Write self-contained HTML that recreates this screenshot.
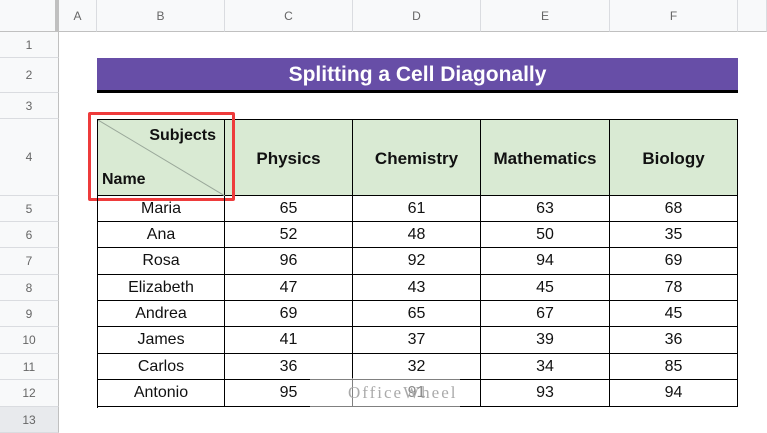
<!DOCTYPE html><html><head><style>
body{margin:0;width:767px;height:433px;overflow:hidden;background:#fff;font-family:"Liberation Sans",Arial,sans-serif;position:relative}
div{position:absolute;box-sizing:border-box}
.ch{top:0;height:32px;background:#f8f9fa;border-right:1px solid #dadce0;border-bottom:1px solid #c0c0c0;color:#666;font-size:12px;text-align:center;line-height:32px}
.rh{left:0;width:59px;background:#f8f9fa;border-right:1px solid #c0c0c0;border-bottom:1px solid #dadce0;color:#666;font-size:12px;text-align:center}
.c{border-right:1px solid #000;border-bottom:1px solid #000;text-align:center;font-size:16px;color:#111}
.h{background:#d9ead3;font-weight:bold;font-size:17px;line-height:77px}
</style></head><body>
<div class="ch" style="left:0;width:59px;border-right:4px solid #c0c0c0"></div>
<div class="ch" style="left:59px;width:38px">A</div>
<div class="ch" style="left:97px;width:128px">B</div>
<div class="ch" style="left:225px;width:128px">C</div>
<div class="ch" style="left:353px;width:128px">D</div>
<div class="ch" style="left:481px;width:129px">E</div>
<div class="ch" style="left:610px;width:128px">F</div>
<div class="ch" style="left:738px;width:29px"></div>
<div class="rh" style="top:32px;height:26px;line-height:26px">1</div>
<div class="rh" style="top:58px;height:35px;line-height:35px">2</div>
<div class="rh" style="top:93px;height:26px;line-height:26px">3</div>
<div class="rh" style="top:119px;height:77px;line-height:77px">4</div>
<div class="rh" style="top:196px;height:26px;line-height:26px">5</div>
<div class="rh" style="top:222px;height:26px;line-height:26px">6</div>
<div class="rh" style="top:248px;height:27px;line-height:27px">7</div>
<div class="rh" style="top:275px;height:26px;line-height:26px">8</div>
<div class="rh" style="top:301px;height:26px;line-height:26px">9</div>
<div class="rh" style="top:327px;height:27px;line-height:27px">10</div>
<div class="rh" style="top:354px;height:26px;line-height:26px">11</div>
<div class="rh" style="top:380px;height:27px;line-height:27px">12</div>
<div class="rh" style="top:407px;height:26px;line-height:26px;background:#e8eaed">13</div>
<div style="left:97px;top:58px;width:641px;height:35px;background:#674ea7;border-bottom:3px solid #000;color:#fff;font-weight:bold;font-size:21px;text-align:center;line-height:34px">Splitting a Cell Diagonally</div>
<div style="left:97px;top:119px;width:641px;height:289px;border-left:1px solid #000;border-top:1px solid #000"></div>
<div class="c h" style="left:97px;top:119px;width:128px;height:77px;border-left:1px solid #000;border-top:1px solid #000;line-height:normal">
<svg style="position:absolute;left:0;top:0" width="127" height="76"><line x1="0" y1="0" x2="127" y2="76" stroke="#9aa89a" stroke-width="1"/></svg>
<span style="position:absolute;right:8px;top:7px;font-size:16px">Subjects</span><span style="position:absolute;left:4px;top:51px;font-size:16px">Name</span></div>
<div class="c h" style="left:225px;top:119px;width:128px;height:77px;border-top:1px solid #000">Physics</div>
<div class="c h" style="left:353px;top:119px;width:128px;height:77px;border-top:1px solid #000">Chemistry</div>
<div class="c h" style="left:481px;top:119px;width:129px;height:77px;border-top:1px solid #000">Mathematics</div>
<div class="c h" style="left:610px;top:119px;width:128px;height:77px;border-top:1px solid #000">Biology</div>
<div style="left:88px;top:112px;width:147px;height:89px;border:3px solid #ee3b3b;border-radius:2px"></div>
<script>
var d=[["Maria",65,61,63,68],["Ana",52,48,50,35],["Rosa",96,92,94,69],["Elizabeth",47,43,45,78],["Andrea",69,65,67,45],["James",41,37,39,36],["Carlos",36,32,34,85],["Antonio",95,91,93,94]];
var tops=[196,222,248,275,301,327,354,380,407],xs=[97,225,353,481,610,738],h="";
d.forEach(function(r,i){var t=tops[i],hh=tops[i+1]-t;r.forEach(function(v,j){h+='<div class="c" style="left:'+xs[j]+'px;top:'+t+'px;width:'+(xs[j+1]-xs[j])+'px;height:'+hh+'px;line-height:'+(hh-1)+'px'+(j==0?';border-left:1px solid #000':'')+'">'+v+'</div>'})});
document.body.insertAdjacentHTML('beforeend',h);
</script>
<div style="left:310px;top:378px;width:150px;height:30px;background:rgba(255,255,255,.5);color:#aaa;font-family:'Liberation Serif',serif;font-size:17px;letter-spacing:2px;line-height:30px;padding-left:38px">OfficeWheel</div>
</body></html>
